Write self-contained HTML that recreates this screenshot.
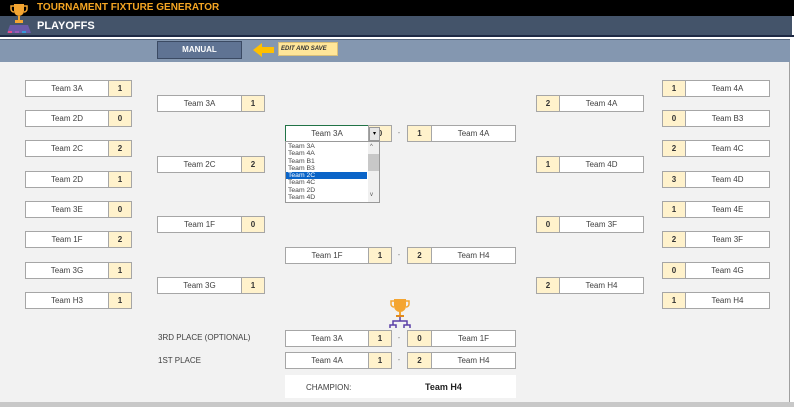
<!DOCTYPE html><html><head><style>
body{margin:0;width:794px;height:407px;overflow:hidden;background:#fff;font-family:"Liberation Sans",sans-serif;position:relative}
div{position:absolute;box-sizing:border-box}
.t,.s{height:17px;border:1px solid #a6a6a6;font-size:8px;line-height:15px;text-align:center;color:#404040}
.t{background:#fff}.s{background:#fff2cc;font-weight:bold;color:#333}
.d{font-size:8px;color:#888;width:10px;text-align:center;height:17px;line-height:15px}
.l{font-size:8px;color:#404040}
</style></head><body>
<div style="left:0;top:0;width:794px;height:16px;background:#000"></div>
<div style="left:0;top:16px;width:792px;height:19px;background:#44546a"></div>
<div style="left:0;top:35px;width:794px;height:2px;background:#1f2a44"></div>
<div style="left:0;top:37px;width:792px;height:2px;background:#fff"></div>
<div style="left:0;top:39px;width:790px;height:23px;background:#8497b0;border-top:1px solid #5a6a80"></div>
<div style="left:0;top:62px;width:790px;height:340px;background:#f2f2f2;border-right:1px solid #a0a0a0"></div>
<div style="left:0;top:402px;width:794px;height:5px;background:#c8c8c8"></div>
<div style="left:37px;top:2px;font-size:10px;font-weight:bold;color:#f5a623">TOURNAMENT FIXTURE GENERATOR</div>
<div style="left:37px;top:20px;font-size:11px;font-weight:bold;color:#fff">PLAYOFFS</div>
<svg style="position:absolute;left:6px;top:2px" width="26" height="32"><path d="M8 2h10v7a5 5 0 0 1-10 0z" fill="#f4a531"/><path d="M8 4h-3v3a3 3 0 0 0 3 3M18 4h3v3a3 3 0 0 1-3 3" stroke="#f4a531" fill="none" stroke-width="1.5"/><rect x="12" y="14" width="2" height="4" fill="#f4a531"/><rect x="9" y="18" width="8" height="3" fill="#f4a531"/><path d="M4 23h18l3 8H1z" fill="#6a5aa8"/><rect x="2" y="29" width="4" height="2" fill="#e74c8c"/><rect x="9" y="29" width="4" height="2" fill="#9b59b6"/><rect x="16" y="29" width="4" height="2" fill="#3498db"/></svg>
<div style="left:157px;top:41px;width:85px;height:18px;background:#5f7393;border:1px solid #3b4a63;color:#fff;font-size:8px;font-weight:bold;text-align:center;line-height:16px">MANUAL</div>
<svg style="position:absolute;left:253px;top:42px" width="24" height="16"><path d="M0 8L9 1v4h12v6H9v4z" fill="#ffc000"/></svg>
<div style="left:278px;top:42px;width:60px;height:14px;background:#ffe699;border:1px solid #d9c07a;font-size:6px;font-style:italic;font-weight:bold;line-height:12px;padding-left:2px;color:#333">EDIT AND SAVE</div>

<div class="t" style="left:25px;top:80px;width:84px">Team 3A</div><div class="s" style="left:108px;top:80px;width:24px">1</div>
<div class="t" style="left:25px;top:110px;width:84px">Team 2D</div><div class="s" style="left:108px;top:110px;width:24px">0</div>
<div class="t" style="left:25px;top:140px;width:84px">Team 2C</div><div class="s" style="left:108px;top:140px;width:24px">2</div>
<div class="t" style="left:25px;top:171px;width:84px">Team 2D</div><div class="s" style="left:108px;top:171px;width:24px">1</div>
<div class="t" style="left:25px;top:201px;width:84px">Team 3E</div><div class="s" style="left:108px;top:201px;width:24px">0</div>
<div class="t" style="left:25px;top:231px;width:84px">Team 1F</div><div class="s" style="left:108px;top:231px;width:24px">2</div>
<div class="t" style="left:25px;top:262px;width:84px">Team 3G</div><div class="s" style="left:108px;top:262px;width:24px">1</div>
<div class="t" style="left:25px;top:292px;width:84px">Team H3</div><div class="s" style="left:108px;top:292px;width:24px">1</div>
<div class="t" style="left:157px;top:95px;width:85px">Team 3A</div><div class="s" style="left:241px;top:95px;width:24px">1</div>
<div class="t" style="left:157px;top:156px;width:85px">Team 2C</div><div class="s" style="left:241px;top:156px;width:24px">2</div>
<div class="t" style="left:157px;top:216px;width:85px">Team 1F</div><div class="s" style="left:241px;top:216px;width:24px">0</div>
<div class="t" style="left:157px;top:277px;width:85px">Team 3G</div><div class="s" style="left:241px;top:277px;width:24px">1</div>
<div class="s" style="left:536px;top:95px;width:24px">2</div><div class="t" style="left:559px;top:95px;width:85px">Team 4A</div>
<div class="s" style="left:536px;top:156px;width:24px">1</div><div class="t" style="left:559px;top:156px;width:85px">Team 4D</div>
<div class="s" style="left:536px;top:216px;width:24px">0</div><div class="t" style="left:559px;top:216px;width:85px">Team 3F</div>
<div class="s" style="left:536px;top:277px;width:24px">2</div><div class="t" style="left:559px;top:277px;width:85px">Team H4</div>
<div class="s" style="left:662px;top:80px;width:24px">1</div><div class="t" style="left:685px;top:80px;width:85px">Team 4A</div>
<div class="s" style="left:662px;top:110px;width:24px">0</div><div class="t" style="left:685px;top:110px;width:85px">Team B3</div>
<div class="s" style="left:662px;top:140px;width:24px">2</div><div class="t" style="left:685px;top:140px;width:85px">Team 4C</div>
<div class="s" style="left:662px;top:171px;width:24px">3</div><div class="t" style="left:685px;top:171px;width:85px">Team 4D</div>
<div class="s" style="left:662px;top:201px;width:24px">1</div><div class="t" style="left:685px;top:201px;width:85px">Team 4E</div>
<div class="s" style="left:662px;top:231px;width:24px">2</div><div class="t" style="left:685px;top:231px;width:85px">Team 3F</div>
<div class="s" style="left:662px;top:262px;width:24px">0</div><div class="t" style="left:685px;top:262px;width:85px">Team 4G</div>
<div class="s" style="left:662px;top:292px;width:24px">1</div><div class="t" style="left:685px;top:292px;width:85px">Team H4</div>
<div class="t" style="left:285px;top:125px;width:84px;border-color:#217346">Team 3A</div><div class="s" style="left:368px;top:125px;width:24px">0</div><div class="d" style="left:394px;top:125px">-</div><div class="s" style="left:407px;top:125px;width:25px">1</div><div class="t" style="left:431px;top:125px;width:85px">Team 4A</div>
<div style="left:369px;top:127px;width:11px;height:14px;background:#e6e6e6;border:1px solid #999;font-size:6px;text-align:center;line-height:12px">▾</div>
<div class="t" style="left:285px;top:247px;width:84px">Team 1F</div><div class="s" style="left:368px;top:247px;width:24px">1</div><div class="d" style="left:394px;top:247px">-</div><div class="s" style="left:407px;top:247px;width:25px">2</div><div class="t" style="left:431px;top:247px;width:85px">Team H4</div>
<div class="l" style="left:158px;top:333px">3RD PLACE (OPTIONAL)</div>
<div class="t" style="left:285px;top:330px;width:84px">Team 3A</div><div class="s" style="left:368px;top:330px;width:24px">1</div><div class="d" style="left:394px;top:330px">-</div><div class="s" style="left:407px;top:330px;width:25px">0</div><div class="t" style="left:431px;top:330px;width:85px">Team 1F</div>
<div class="l" style="left:158px;top:356px">1ST PLACE</div>
<div class="t" style="left:285px;top:352px;width:84px">Team 4A</div><div class="s" style="left:368px;top:352px;width:24px">1</div><div class="d" style="left:394px;top:352px">-</div><div class="s" style="left:407px;top:352px;width:25px">2</div><div class="t" style="left:431px;top:352px;width:85px">Team H4</div>
<div style="left:285px;top:375px;width:231px;height:23px;background:#fff"></div>
<div class="l" style="left:306px;top:383px">CHAMPION:</div>
<div style="left:425px;top:382px;font-size:9px;font-weight:bold;color:#222">Team H4</div>
<svg style="position:absolute;left:388px;top:297px" width="24" height="32"><path d="M6 2h12v7a6 6 0 0 1-12 0z" fill="#f4a531"/><path d="M6 4h-3v3a3 3 0 0 0 3 3M18 4h3v3a3 3 0 0 1-3 3" stroke="#f4a531" fill="none" stroke-width="1.5"/><rect x="11" y="14" width="2" height="4" fill="#f4a531"/><rect x="8" y="18" width="8" height="2" fill="#e08a1e"/><path d="M12 20v4M5 28v-4h14v4M2 31v-3h6v3M16 31v-3h6v3" stroke="#5b3fa8" stroke-width="1.5" fill="none"/></svg>
<div style="left:285px;top:141px;width:95px;height:62px;background:#fff;border:1px solid #999;font-size:6.8px;color:#444;line-height:7.3px;padding-top:1px">
<div style="position:static;padding-left:2px">Team 3A</div><div style="position:static;padding-left:2px">Team 4A</div><div style="position:static;padding-left:2px">Team B1</div><div style="position:static;padding-left:2px">Team B3</div><div style="position:static;padding-left:2px;background:#0a64c8;color:#fff;width:81px">Team 2C</div><div style="position:static;padding-left:2px">Team 4C</div><div style="position:static;padding-left:2px">Team 2D</div><div style="position:static;padding-left:2px">Team 4D</div>
<div style="left:82px;top:0;width:11px;height:60px;background:#f0f0f0"></div>
<div style="left:82px;top:12px;width:11px;height:17px;background:#c8c8c8"></div>
<div style="left:84px;top:2px;font-size:6px;color:#555">^</div>
<div style="left:84px;top:50px;font-size:6px;color:#555">v</div>
</div>
</body></html>
